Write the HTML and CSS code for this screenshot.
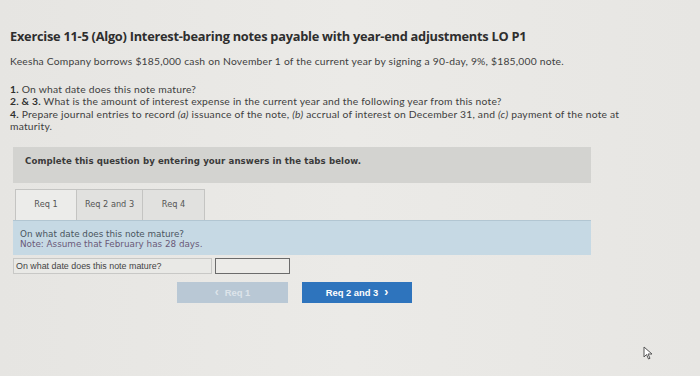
FILE: index.html
```html
<!DOCTYPE html>
<html>
<head>
<meta charset="utf-8">
<link rel="stylesheet" href="styles.css">
</head>
<body>
<div class="page">
  <h1 class="title">Exercise 11-5 (Algo) Interest-bearing notes payable with year-end adjustments LO P1</h1>
  <p class="intro">Keesha Company borrows $185,000 cash on November 1 of the current year by signing a 90-day, 9%, $185,000 note.</p>
  <div class="reqs">
    <p><b>1.</b> On what date does this note mature?</p>
    <p><b>2. &amp; 3.</b> What is the amount of interest expense in the current year and the following year from this note?</p>
    <p><b>4.</b> Prepare journal entries to record <i>(a)</i> issuance of the note, <i>(b)</i> accrual of interest on December 31, and <i>(c)</i> payment of the note at <span>maturity.</span></p>
  </div>
  <div class="instr">Complete this question by entering your answers in the tabs below.</div>
  <div class="tabs">
    <div class="tab active">Req 1</div>
    <div class="tab">Req 2 and 3</div>
    <div class="tab">Req 4</div>
  </div>
  <div class="panel">
    <div>On what date does this note mature?</div>
    <div class="note">Note: Assume that February has 28 days.</div>
  </div>
  <div class="qrow">
    <div class="qlabel">On what date does this note mature?</div>
    <div class="qinput"></div>
  </div>
  <div class="nav">
    <div class="btn disabled"><span class="chev">&lsaquo;</span> Req 1</div>
    <div class="btn primary">Req 2 and 3 <span class="chev">&rsaquo;</span></div>
  </div>
</div>
<svg class="cursor" width="12" height="14" viewBox="0 0 12 14"><path d="M1 1 L1 11 L3.5 8.5 L5.5 13 L7 12.3 L5 8 L9 8 Z" fill="#fff" stroke="#555" stroke-width="1"/></svg>
</body>
</html>
```
FILE: styles.css
```css
html, body {
  margin: 0;
  padding: 0;
}
body {
  width: 700px;
  height: 376px;
  overflow: hidden;
  background: linear-gradient(90deg, #e6e5e2 0%, #ebeae7 50%, #e7e6e3 100%);
  position: relative;
  font-family: "Lato", "Open Sans", sans-serif;
  color: #3a3a3a;
}
.page {
  padding: 27px 0 0 10px;
}
.title {
  margin: 0;
  font-family: "Open Sans", sans-serif;
  font-size: 12.8px;
  font-weight: 700;
  color: #2e2e2e;
  letter-spacing: -0.25px;
  line-height: 18px;
}
.intro {
  margin: 10px 0 0 0;
  font-size: 10.3px;
  line-height: 12.5px;
  color: #404040;
  letter-spacing: 0.22px;
}
.reqs {
  margin-top: 15px;
  font-size: 10.3px;
  line-height: 12.5px;
  color: #404040;
  letter-spacing: 0.22px;
}
.reqs p {
  margin: 0;
  width: 625px;
}
.reqs b {
  color: #303030;
}
.instr {
  margin: 14px 0 0 3px;
  width: 578px;
  height: 36px;
  box-sizing: border-box;
  background: #d3d3d0;
  padding: 9px 0 0 12px;
  font-family: "DejaVu Sans", Verdana, sans-serif;
  font-size: 8.6px;
  font-weight: 700;
  color: #3a3a3a;
  letter-spacing: 0.1px;
}
.tabs {
  display: flex;
  margin: 6px 0 0 5px;
  height: 31px;
}
.tab {
  box-sizing: border-box;
  width: 66px;
  height: 31px;
  border: 1px solid #c4c4c2;
  border-bottom: none;
  background: #e1e1df;
  display: flex;
  align-items: center;
  justify-content: center;
  font-family: "DejaVu Sans", Verdana, sans-serif;
  font-size: 8.2px;
  color: #555;
  padding-bottom: 2px;
}
.tab + .tab {
  border-left: none;
}
.tab.active {
  width: 62px;
  background: #ececea;
}
.tab:last-child {
  width: 62px;
}
.panel {
  margin-left: 3px;
  width: 578px;
  height: 35px;
  box-sizing: border-box;
  background: #c6d9e4;
  border-top: 1px solid #b2c6d2;
  padding: 8px 0 0 7px;
  font-family: "DejaVu Sans", Verdana, sans-serif;
  font-size: 8.8px;
  line-height: 10.5px;
  color: #4a5560;
}
.panel .note {
  color: #6a5a78;
}
.qrow {
  display: flex;
  margin: 3px 0 0 3px;
  height: 16px;
  gap: 3px;
}
.qlabel {
  box-sizing: border-box;
  width: 199px;
  height: 16px;
  border: 1px solid #c8c8c6;
  padding: 2px 0 0 2px;
  font-family: "Liberation Sans", Arial, sans-serif;
  font-size: 8.9px;
  color: #444;
  background: #e9e9e6;
}
.qinput {
  box-sizing: border-box;
  width: 75px;
  height: 16px;
  border: 1.5px solid #6b6b6b;
  background: #ecebe8;
}
.nav {
  display: flex;
  gap: 14px;
  margin: 8px 0 0 167px;
}
.btn {
  box-sizing: border-box;
  width: 111px;
  height: 21px;
  display: flex;
  align-items: center;
  justify-content: center;
  font-family: "Liberation Sans", Arial, sans-serif;
  font-weight: 700;
  font-size: 9.4px;
  gap: 6px;
}
.btn.disabled {
  background: #b9c8d5;
  color: #dde4ea;
  width: 111px;
}
.btn.primary {
  background: #2e74bd;
  color: #ffffff;
  width: 110px;
}
.chev {
  font-size: 12px;
  line-height: 10px;
  margin-top: -1px;
}
.cursor {
  position: absolute;
  left: 643px;
  top: 346px;
}
```
